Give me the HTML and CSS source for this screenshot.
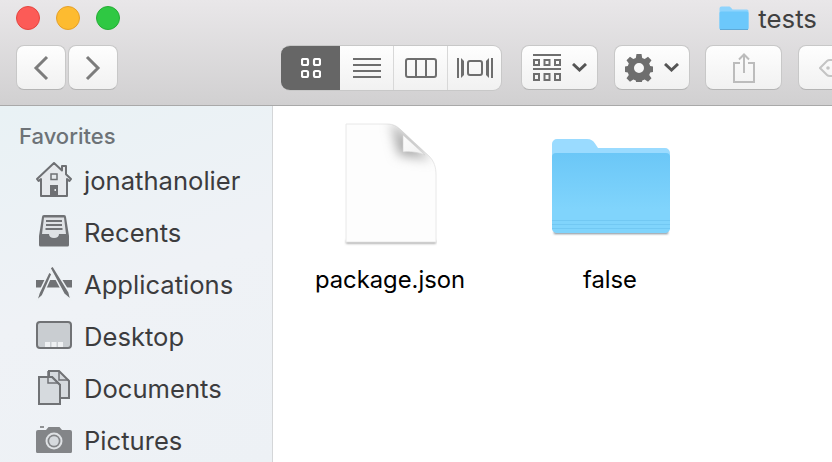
FILE: index.html
```html
<!DOCTYPE html>
<html>
<head>
    <meta charset="UTF-8">
    <title>tests</title>
    <link rel="stylesheet" href="styles.css">
</head>
<body>
    <div class="window">
        <header class="toolbar">
            <div class="title-row">
                <div class="lights">
                    <span class="light red"></span>
                    <span class="light yellow"></span>
                    <span class="light green"></span>
                </div>
                <div class="title">
                    <svg class="title-folder" viewBox="0 0 30 24">
                        <path d="M.5 2.500a2 2 0 0 1 2-2h7c1.500 0 2 .6 2.800 1.600L13.500 3.500H28a1.500 1.500 0 0 1 1.500 1.500v17a1.500 1.500 0 0 1-1.500 1.500H2A1.500 1.500 0 0 1 .5 22z" fill="#8ed4fd"/>
                        <path d="M.5 7a1.500 1.500 0 0 1 1.500-1.500h26A1.500 1.500 0 0 1 29.500 7v15a1.500 1.500 0 0 1-1.500 1.500H2A1.500 1.500 0 0 1 .5 22z" fill="#6cc8fb"/>
                        <path d="M1 23.500h28" stroke="#5fa9d6" stroke-width="1"/>
                    </svg>
                    <span>tests</span>
                </div>
            </div>
            <div class="tools">
                <div class="nav-group">
                    <button class="btn nav-btn">
                        <svg width="16" height="26" viewBox="0 0 16 26"><path d="M14 2 3 13l11 11" class="chev"/></svg>
                    </button>
                    <button class="btn nav-btn">
                        <svg width="16" height="26" viewBox="0 0 16 26"><path d="m2 2 11 11L2 24" class="chev"/></svg>
                    </button>
                </div>
                <div class="views">
                    <button class="view view-active">
                        <svg width="20" height="20" viewBox="0 0 20 20" fill="none" stroke="#fff" stroke-width="2.200">
                            <rect x="1" y="1" width="6" height="6" rx="1.500"/><rect x="13" y="1" width="6" height="6" rx="1.500"/>
                            <rect x="1" y="13" width="6" height="6" rx="1.500"/><rect x="13" y="13" width="6" height="6" rx="1.500"/>
                        </svg>
                    </button>
                    <button class="view view-list">
                        <svg width="28" height="20" viewBox="0 0 28 20" fill="#6e6e6e">
                            <rect width="28" height="2" y="0"/><rect width="28" height="2" y="6"/><rect width="28" height="2" y="12"/><rect width="28" height="2" y="18"/>
                        </svg>
                    </button>
                    <button class="view view-cols">
                        <svg width="32" height="20" viewBox="0 0 32 20" fill="none" stroke="#6e6e6e" stroke-width="2">
                            <rect x="1" y="1" width="30" height="18" rx="2"/><path d="M11 1v18M21 1v18"/>
                        </svg>
                    </button>
                    <button class="view view-flow">
                        <svg width="36" height="20" viewBox="0 0 36 20" fill="#6e6e6e">
                            <rect x="0" y="0" width="2" height="20"/><path d="M4 0l3 3v14l-3 3z"/>
                            <rect x="11" y="3" width="14" height="14" rx="2" fill="none" stroke="#6e6e6e" stroke-width="2"/>
                            <path d="M32 0l-3 3v14l3 3z"/><rect x="34" y="0" width="2" height="20"/>
                        </svg>
                    </button>
                </div>
                <button class="btn arrange">
                    <svg width="28" height="27" viewBox="0 0 28 27" fill="none" stroke="#6e6e6e" stroke-width="2">
                        <path d="M0 1h28M0 15h28"/>
                        <rect x="1" y="6" width="5" height="5"/><rect x="11.500" y="6" width="5" height="5"/><rect x="22" y="6" width="5" height="5"/>
                        <rect x="1" y="20" width="5" height="6"/><rect x="11.500" y="20" width="5" height="6"/><rect x="22" y="20" width="5" height="6"/>
                    </svg>
                    <svg class="caret" width="15" height="9" viewBox="0 0 15 9"><path d="m1 1 6.500 6L14 1" class="caret-line"/></svg>
                </button>
                <button class="btn gear">
                    <svg width="28" height="28" viewBox="0 0 28 28">
                        <path fill="#6e6e6e" fill-rule="evenodd" d="M11.500 0h5l.7 4 2.500 1 3.300-2.300 3.500 3.500-2.300 3.300 1 2.500 4 .7v5l-4 .7-1 2.500 2.300 3.300-3.500 3.500-3.300-2.300-2.500 1-.7 4h-5l-.7-4-2.500-1-3.300 2.300-3.500-3.500 2.300-3.300-1-2.500-4-.7v-5l4-.7 1-2.500L1.500 6.200 5 2.700 8.300 5l2.500-1zM14 9a5 5 0 1 0 0 10 5 5 0 0 0 0-10z"/>
                    </svg>
                    <svg class="caret" width="15" height="9" viewBox="0 0 15 9"><path d="m1 1 6.500 6L14 1" class="caret-line"/></svg>
                </button>
                <button class="btn share">
                    <svg width="22" height="30" viewBox="0 0 22 30" fill="none" stroke="#bcbcbc" stroke-width="2">
                        <path d="M7 10H1v19h20V10h-6M11 20V2M6 6.500 11 1.500l5 5"/>
                    </svg>
                </button>
                <button class="btn tag">
                    <svg width="30" height="20" viewBox="0 0 30 20" fill="none" stroke="#c4c4c4" stroke-width="2">
                        <path d="M1 10 8 3q1-1 3-1h17v16H11q-2 0-3-1z"/><circle cx="9" cy="10" r="1.800" fill="#c4c4c4" stroke="none"/>
                    </svg>
                </button>
            </div>
        </header>
        <div class="body">
            <aside class="sidebar">
                <h3 class="side-head">Favorites</h3>
                <ul class="side-list">
                    <li class="side-item">
                        <svg class="side-icon" viewBox="0 0 36 36">
                            <path d="M18 1 1 17l1.500 2L5 17v17h26V17l2.500 2 1.500-2-5-4.700V4h-4v4.500z" fill="#e6e9ec" stroke="#6e7073" stroke-width="2" stroke-linejoin="round"/>
                            <rect x="15" y="12" width="6" height="5.500" fill="#e6e9ec" stroke="#6e7073" stroke-width="1.500"/>
                            <rect x="14" y="23" width="8" height="11" fill="#6e7073"/>
                            <rect x="18.500" y="27" width="1.500" height="2" fill="#e6e9ec"/>
                        </svg>
                        <span>jonathanolier</span>
                    </li>
                    <li class="side-item">
                        <svg class="side-icon" viewBox="0 0 36 36">
                            <path d="M6 3a2 2 0 0 1 2-2h20a2 2 0 0 1 2 2l3 19v9a1.500 1.500 0 0 1-1.500 1.500h-27A1.500 1.500 0 0 1 3 31v-9z" fill="#707275"/>
                            <path d="M8 3.500h20L30 20h-7c0 2.500-2 4-5 4s-5-1.500-5-4H6z" fill="#dfe2e5"/>
                            <path d="M10 7h16M10 11h16M9.500 15h17" stroke="#707275" stroke-width="1.800"/>
                        </svg>
                        <span>Recents</span>
                    </li>
                    <li class="side-item">
                        <svg class="side-icon" viewBox="0 0 36 36">
                            <rect x="0" y="14" width="36" height="7.500" fill="#707275"/>
                            <path d="M13 6 3 27l-2.500 8 6-5.500L16 8z" fill="#707275" stroke="#eef2f5" stroke-width="1.500"/>
                            <path d="M17 0l-3 2 14 26 7 6-2-8z" fill="#707275" stroke="#eef2f5" stroke-width="1.500"/>
                        </svg>
                        <span>Applications</span>
                    </li>
                    <li class="side-item">
                        <svg class="side-icon" viewBox="0 0 36 36">
                            <rect x="1" y="4" width="34" height="26" rx="3" fill="#c9cdd1" stroke="#707275" stroke-width="2"/>
                            <rect x="9" y="24" width="5" height="5" fill="#eff1f3"/><rect x="15.500" y="24" width="5" height="5" fill="#eff1f3"/><rect x="22" y="24" width="5" height="5" fill="#eff1f3"/>
                        </svg>
                        <span>Desktop</span>
                    </li>
                    <li class="side-item">
                        <svg class="side-icon" viewBox="0 0 36 36">
                            <path d="M13 1h10l10 10v17H24V15l-8-8h-3z" fill="#d6dade" stroke="#707275" stroke-width="2"/>
                            <path d="M3 7h13l8 8v19H3z" fill="#d6dade" stroke="#707275" stroke-width="2"/>
                            <path d="M12 1v12h10M23 1v9h10" fill="none" stroke="#707275" stroke-width="1.500"/>
                        </svg>
                        <span>Documents</span>
                    </li>
                    <li class="side-item">
                        <svg class="side-icon" viewBox="0 0 36 36">
                            <path d="M0 10a2 2 0 0 1 2-2h8l2.500-3h11L26 8h8a2 2 0 0 1 2 2v19.500a1.500 1.500 0 0 1-1.500 1.500h-33A1.500 1.500 0 0 1 0 29.500z" fill="#838588"/>
                            <circle cx="18" cy="19" r="8.500" fill="#dfe2e5"/>
                            <circle cx="18" cy="19" r="6.500" fill="#838588"/>
                            <circle cx="18" cy="19" r="4.800" fill="#d6dade"/>
                            <path d="M4 5h4" stroke="#707275" stroke-width="1.500"/>
                        </svg>
                        <span>Pictures</span>
                    </li>
                </ul>
            </aside>
            <main class="files">
                <div class="file">
                    <div class="file-icon">
                        <svg width="94" height="124" viewBox="-2 0 94 124">
                            <defs>
                                <clipPath id="sheet">
                                    <path d="M1 1H42C48 1 52 3 56 7L84 33C89 38 91 44 91 52V119H1Z"/>
                                </clipPath>
                                <filter id="soft" x="-50%" y="-50%" width="200%" height="200%">
                                    <feGaussianBlur stdDeviation="6"/>
                                </filter>
                                <filter id="edge" x="-10%" y="-100%" width="120%" height="300%">
                                    <feGaussianBlur stdDeviation="1"/>
                                </filter>
                                <linearGradient id="corner" x1="0" y1="0" x2="1" y2="1">
                                    <stop offset="0" stop-color="#fcfcfc"/>
                                    <stop offset="1" stop-color="#f0f0f0"/>
                                </linearGradient>
                            </defs>
                            <rect x="1" y="117.500" width="90" height="3" fill="#9a9a9a" filter="url(#edge)"/>
                            <path d="M1 1H42C48 1 52 3 56 7L84 33C89 38 91 44 91 52V119H1Z" fill="#fdfdfd" stroke="#e8e8e8"/>
                            <g clip-path="url(#sheet)">
                                <path d="M46 -2 54 32 86 36z" fill="#a4a4a4" filter="url(#soft)"/>
                            </g>
                            <path d="M58 12V29C64 28 73 29 80 32z" fill="url(#corner)" stroke="#d0d0d0" stroke-width=".6"/>
                        </svg>
                    </div>
                    <div class="file-name">package.json</div>
                </div>
                <div class="file">
                    <div class="file-icon folder-icon">
                        <svg width="120" height="100" viewBox="-1 0 120 100">
                            <defs>
                                <linearGradient id="front" x1="0" y1="0" x2="0" y2="1">
                                    <stop offset="0" stop-color="#6bc7f7"/>
                                    <stop offset=".7" stop-color="#80d4fc"/>
                                    <stop offset="1" stop-color="#80d4fc"/>
                                </linearGradient>
                                <filter id="drop" x="-5%" y="-100%" width="110%" height="300%">
                                    <feGaussianBlur stdDeviation="1"/>
                                </filter>
                            </defs>
                            <rect x="3" y="94" width="114" height="3" fill="#7f8d97" filter="url(#drop)"/>
                            <path d="M1 7a5 5 0 0 1 5-5h30c4 0 6 1.500 8 4.500l3 4.500H114a5 5 0 0 1 5 5V91a5 5 0 0 1-5 5H6a5 5 0 0 1-5-5z" fill="#9adbff"/>
                            <path d="M1 20a4 4 0 0 1 4-4h110a4 4 0 0 1 4 4v71a5 5 0 0 1-5 5H6a5 5 0 0 1-5-5z" fill="url(#front)"/>
                            <path d="M1 83.500h118M1 87.500h118M1 91.500h118" stroke="#72c8f3" stroke-width="1"/>
                        </svg>
                    </div>
                    <div class="file-name">false</div>
                </div>
            </main>
        </div>
    </div>
</body>
</html>
```

FILE: styles.css
```css
html, body {
    margin: 0;
    padding: 0;
}
body {
    font-family: Inter, "Liberation Sans", sans-serif;
    background: #fff;
    overflow: hidden;
}
.window {
    width: 832px;
    height: 462px;
    display: flex;
    flex-direction: column;
    overflow: hidden;
}
.toolbar {
    height: 106px;
    box-sizing: border-box;
    padding: 6px 0 0 16px;
    background: linear-gradient(#e9e7e9, #d1d0d1);
    border-bottom: 1px solid #a9a9a9;
    flex-shrink: 0;
}
.title-row {
    height: 24px;
    display: flex;
    justify-content: space-between;
    align-items: center;
}
.lights {
    display: flex;
    gap: 16px;
}
.light {
    width: 24px;
    height: 24px;
    box-sizing: border-box;
    border-radius: 50%;
    border: 1px solid;
}
.red {
    background: #fc5b57;
    border-color: #e5453f;
}
.yellow {
    background: #fdbb30;
    border-color: #e5a029;
}
.green {
    background: #2fc843;
    border-color: #25ad35;
}
.title {
    display: flex;
    align-items: center;
    gap: 9px;
    padding-right: 15px;
    font-size: 25.800px;
    color: #404040;
}
.title-folder {
    width: 30px;
    height: 24px;
}
.tools {
    display: flex;
    margin-top: 15px;
    height: 46px;
}
.tools > * {
    flex-shrink: 0;
}
.btn {
    height: 45px;
    padding: 0;
    box-sizing: border-box;
    background: linear-gradient(#fefefe, #f1f1f1);
    border: 1px solid #c8c8c8;
    border-bottom-color: #b4b4b4;
    border-radius: 8px;
    display: flex;
    align-items: center;
    justify-content: center;
}
.nav-group {
    display: flex;
    gap: 2px;
}
.nav-btn {
    width: 50px;
}
.chev {
    fill: none;
    stroke: #7c7c7c;
    stroke-width: 3;
}
.views {
    display: flex;
    margin-left: 163px;
    width: 221px;
    height: 46px;
    box-sizing: border-box;
    border-radius: 9px;
    border: 1px solid #c8c8c8;
    border-left: 0;
    background: linear-gradient(#fefefe, #f1f1f1);
    overflow: hidden;
}
.view {
    padding: 0;
    height: 100%;
    background: none;
    border: 0;
    border-right: 1px solid #d8d8d8;
    display: flex;
    align-items: center;
    justify-content: center;
}
.view-active {
    width: 59px;
    background: #666;
    border-right: 0;
}
.view-list,
.view-cols {
    width: 54px;
}
.view-flow {
    flex: 1;
    border-right: 0;
}
.arrange {
    width: 77px;
    margin-left: 19px;
    gap: 11px;
}
.gear {
    width: 76px;
    margin-left: 16px;
    gap: 11px;
}
.share {
    width: 77px;
    margin-left: 15px;
}
.tag {
    width: 60px;
    margin-left: 16px;
    justify-content: flex-start;
    padding-left: 20px;
}
.caret-line {
    fill: none;
    stroke: #555;
    stroke-width: 3;
}
.body {
    flex: 1;
    display: flex;
    min-height: 0;
}
.sidebar {
    width: 273px;
    box-sizing: border-box;
    flex-shrink: 0;
    background: linear-gradient(160deg, #e9f2f5, #eff2f6 50%, #edf1f5);
    border-right: 1px solid #d4d6d8;
    padding: 17px 0 0 19px;
    overflow: hidden;
}
.side-head {
    margin: 0;
    font-size: 22px;
    line-height: 26px;
    font-weight: 500;
    color: #6d7377;
}
.side-list {
    list-style: none;
    margin: 5px 0 0;
    padding: 0 0 0 17px;
}
.side-item {
    height: 52px;
    display: flex;
    align-items: center;
    gap: 12px;
    font-size: 25.600px;
    color: #3c3c3e;
}
.side-icon {
    width: 36px;
    height: 36px;
    flex-shrink: 0;
}
.files {
    flex: 1;
    display: flex;
    padding: 17px 0 0 7px;
}
.file {
    width: 220px;
    text-align: center;
}
.file-icon {
    height: 122px;
    box-sizing: border-box;
    display: flex;
    justify-content: center;
    align-items: flex-start;
}
.folder-icon {
    padding-top: 14px;
}
.file-name {
    margin-top: 21px;
    font-size: 23.800px;
    line-height: 28px;
    color: #000;
}
```
